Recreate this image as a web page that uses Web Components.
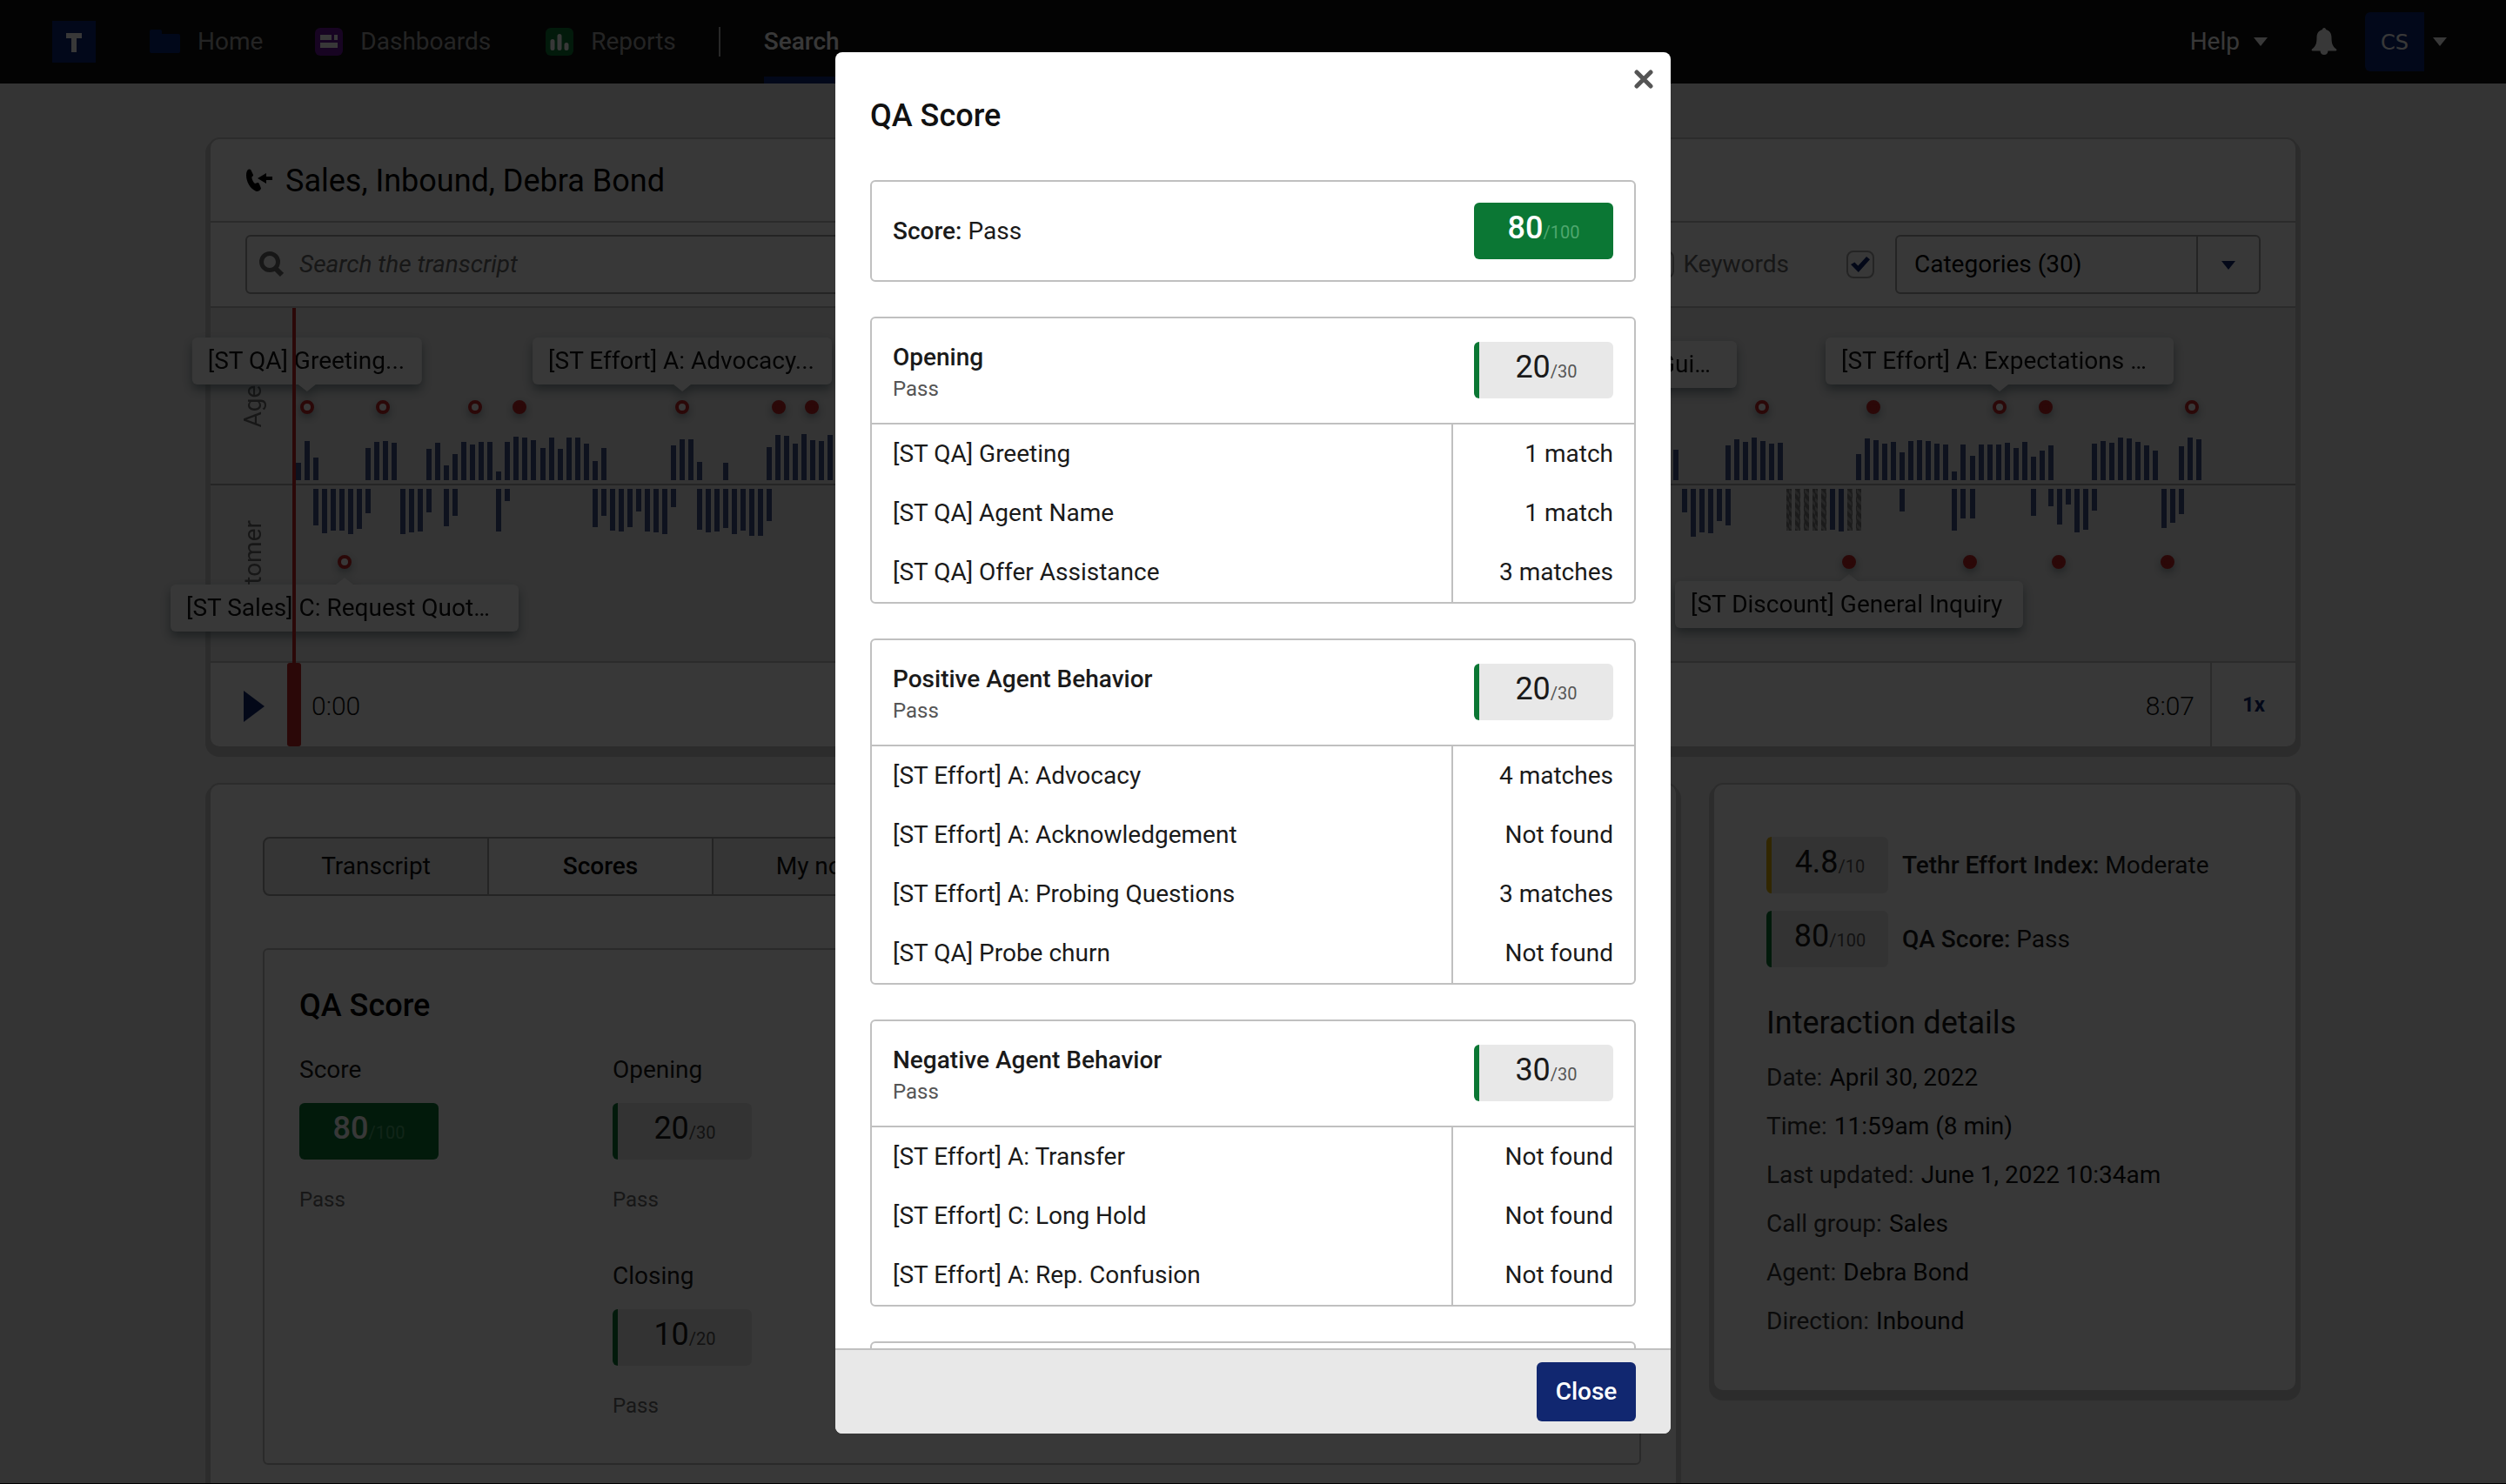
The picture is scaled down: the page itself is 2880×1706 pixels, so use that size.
<!DOCTYPE html>
<html lang="en">
<head>
<meta charset="utf-8">
<title>QA Score</title>
<style>
  html, body { margin: 0; height: 100%; }
  body { overflow: hidden; background: #ebebeb; color: #111; font: 400 28px/40px Roboto, "Liberation Sans", sans-serif; }
</style>
</head>
<body>
<call-page></call-page>
<qa-modal></qa-modal>

<script>
const define = (name, html, setup) => {
  const tpl = document.createElement('template');
  tpl.innerHTML = html;
  customElements.define(name, class extends HTMLElement {
    connectedCallback() {
      if (this.shadowRoot) return;
      this.attachShadow({ mode: 'open' }).append(tpl.content.cloneNode(true));
      if (setup) setup(this, this.shadowRoot);
    }
  });
};

/* ---------- score badge ---------- */
define('score-badge', `
<style>
  :host { display: block; flex: none; width: 160px; --tone: #0b7734; }
  :host([tone="amber"]) { --tone: #e5b000; }
  :host([size="small"]) { width: 140px; }
  .box { box-sizing: border-box; height: 65px; border-radius: 6px; border-left: 6px solid var(--tone); background: #e8e8e8;
         display: flex; justify-content: center; align-items: baseline; line-height: 58px; color: #1a1a1a; }
  .value { font-size: 36px; }
  .max { font-size: 20px; color: #555; }
  :host([solid]) .box { background: var(--tone); border-left: 0; color: #fff; }
  :host([solid]) .value { font-weight: 500; }
  :host([solid]) .max { color: #4fa76e; }
</style>
<div class="box"><span class="value"></span><span class="max"></span></div>`,
(el, root) => {
  root.querySelector('.value').textContent = el.getAttribute('value');
  root.querySelector('.max').textContent = '/' + el.getAttribute('max');
});

/* ---------- top navigation ---------- */
define('app-nav', `
<style>
  :host { display: flex; justify-content: space-between; align-items: center; height: 96px; padding: 0 68px 0 60px; background: #0e0e0e; color: #fff; }
  nav, .right { display: flex; align-items: center; }
  a { display: flex; align-items: center; color: #a6a6a6; text-decoration: none; line-height: 94px; }
  svg { display: block; flex: none; }
  .logo { margin-right: 62px; }
  .home { gap: 20px; margin-right: 60px; }
  .dash { gap: 20px; margin-right: 63px; }
  .rep { gap: 20px; }
  .rule { width: 2px; height: 34px; margin: 0 50px 0 49px; background: #b8b8b8; }
  .search { box-sizing: border-box; height: 96px; padding-top: 8px; border-bottom: 8px solid #0b2778; color: #fff; font-weight: 500; }
  button { display: flex; align-items: center; border: 0; margin: 0; padding: 0; background: none; color: #fff; font: inherit; }
  .help { gap: 16px; margin-right: 50px; line-height: 94px; }
  .bell { margin-right: 32px; }
  .user { gap: 10px; }
  .avatar { width: 68px; height: 68px; border-radius: 6px 0 0 6px; background: #0b2778; font: 24px/70px "DejaVu Sans", sans-serif; text-align: center; }
</style>
<nav aria-label="Main">
  <a class="logo" href="#" aria-label="Start"><svg width="50" height="48"><path fill="#0b2778" d="M0 0h50v48H0z"/><path fill="#fff" d="M16 14h18v6h-6v16h-6V20h-6z"/></svg></a>
  <a class="home" href="#"><svg width="35" height="28"><path fill="#082678" d="M2 0h10q2 0 2 2v3h19q2 0 2 2v18q0 2-2 2H2q-2 0-2-2V2q0-2 2-2z"/></svg>Home</a>
  <a class="dash" href="#"><svg width="32" height="32"><rect width="32" height="32" rx="6" fill="#69129b"/><path fill="#fff" d="M6 8h13v6H6zM22 8h4v6h-4zM6 17h20v6H6z"/></svg>Dashboards</a>
  <a class="rep" href="#"><svg width="32" height="32"><rect width="32" height="32" rx="6" fill="#0b7734"/><g stroke="#fff" stroke-width="5" stroke-linecap="round"><path d="M8 15.500v8M16 9.500v14M24 19.500v4"/></g></svg>Reports</a>
  <span class="rule"></span>
  <a class="search" href="#" aria-current="page">Search</a>
</nav>
<div class="right">
  <button class="help">Help<svg width="16" height="10"><path fill="#fff" d="M0 0h16L8 10z"/></svg></button>
  <button class="bell" aria-label="Notifications"><svg width="30" height="32"><path fill="#fff" d="M15 0c1.500 0 2 1 2 2 4 1 6.500 4 6.500 9 0 7 1 10 5.500 13.500.8.900.4 2-.7 2H19.500c-.3 3-2 4.500-4.500 4.500s-4.200-1.500-4.500-4.500H1.700c-1.100 0-1.500-1.100-.7-2C5.500 21 6.500 18 6.500 11c0-5 2.500-8 6.500-9 0-1 .5-2 2-2z"/></svg></button>
  <button class="user" aria-label="Account"><span class="avatar">CS</span><svg width="16" height="10"><path fill="#fff" d="M0 0h16L8 10z"/></svg></button>
</div>`);

/* ---------- white card ---------- */
define('ui-card', `
<style>
  :host { display: block; box-sizing: border-box; background: #fff; border: 2px solid #c8c8c8; border-radius: 12px; box-shadow: 0 6px 0 4px #c8c8c8; }
</style><slot></slot>`);

/* ---------- search bar of the call ---------- */
define('transcript-bar', `
<style>
  :host { display: flex; align-items: center; height: 96px; padding: 0 40px; border-bottom: 2px solid #c4c4c4; }
  .find { box-sizing: border-box; flex: 1; display: flex; align-items: center; gap: 18px; height: 68px; padding: 0 14px; margin-right: 40px; border: 2px solid #a2a2a2; border-radius: 6px; }
  .find input { flex: 1; min-width: 0; border: 0; padding: 0; background: none; outline: 0; font: italic 28px/40px Roboto, sans-serif; }
  .find input::placeholder { color: #6a6a6a; opacity: 1; }
  label { display: flex; align-items: center; gap: 10px; margin-right: 66px; color: #6a6a6a; }
  input[type=checkbox] { appearance: none; box-sizing: border-box; flex: none; width: 32px; height: 32px; margin: 0; border: 2px solid #a2a2a2; border-radius: 8px; display: grid; place-items: center; }
  input:checked::before { content: ""; width: 22px; height: 18px; background: #112770; clip-path: polygon(0 50%, 20% 36%, 38% 58%, 82% 0, 100% 18%, 40% 100%); }
  .pick { display: grid; grid-template-columns: 1fr 74px; width: 420px; margin-left: 24px; }
  select { grid-area: 1 / 1 / 2 / 3; appearance: none; box-sizing: border-box; height: 68px; border: 2px solid #a2a2a2; border-radius: 6px; padding: 0 20px; background: none; color: #000; font: inherit; }
  .arrow { grid-area: 1 / 2; pointer-events: none; border-left: 2px solid #a2a2a2; margin: 2px 0; padding: 2px 2px 0 0; display: grid; place-items: center; }
</style>
<div class="find">
  <svg width="28" height="30" fill="none" stroke="#6a6a6a"><circle cx="12" cy="12" r="9.500" stroke-width="5"/><path d="M18 19l8 8" stroke-width="6"/></svg>
  <input type="text" aria-label="Search the transcript" placeholder="Search the transcript">
</div>
<label><input type="checkbox">Keywords</label>
<input type="checkbox" checked aria-label="Show categories">
<div class="pick">
  <select aria-label="Categories"><option>Categories (30)</option></select>
  <span class="arrow"><svg width="16" height="10"><path fill="#112770" d="M0 0h16L8 10z"/></svg></span>
</div>`);

/* ---------- speech timeline ---------- */
const SLOTS = 219;
const TRACK = 2194;
const AGENT = [
  [0, 20,45,26], [8, 37,44,45,43],
  [15, 36,43,17,30,44,41,44,44,10,44,50,49,46,37,49,36,49,49,42,22,37],
  [43, 40,47,47,21], [49, 20], [54, 38,52,51,42,53,46,45,52], [158, 35],
  [164, 40,47,44,49,45,42,43],
  [179, 30,48,46,42,44,32,45,46,45,42,41,10,41,28,41,41,41,43,37,44,27,34,40],
  [206, 42,45,43,49,48,44,40,34], [216, 39,49,47]
];
const CUSTOMER = [
  [2, 42,51,48,48,52,46,28], [12, 52,50,49,27], [17, 43,31], [23, 49,14],
  [34, 44,31,48,49,44,26,49,50,52,21], [46, 47,50,49,45,52,48,54,54,37],
  [159, 27,55,50,51,37,42], [171, -48,-48,-48,-48,-48,47,49,-48,-48],
  [184, 26], [190, 48,34,34], [199, 31], [201, 20,41,18,50,47,25], [214, 45,39,29]
];
const MARKS = {
  agent: { open: [13, 100, 206, 444, 1685, 1958, 2179], full: [257, 555, 593, 1813, 2011] },
  customer: { open: [56], full: [1785, 1924, 2026, 2151] }
};
const pct = x => (x / TRACK * 100) + '%';

define('speech-lane', `
<style>
  :host { display: flex; height: 202px; }
  :host([side="agent"]) { border-bottom: 2px solid #a8a8a8; }
  .who { flex: none; width: 98px; display: grid; place-items: center; color: #6a6a6a; }
  .who span { writing-mode: vertical-rl; transform: rotate(180deg); }
  .track { flex: 1; position: relative; display: flex; margin-right: 104px; }
  .bars { width: 100%; height: 60px; margin-top: 4px; }
  :host([side="agent"]) .bars { align-self: flex-end; margin: 0 0 4px; }
  i { position: absolute; top: 80px; box-sizing: border-box; width: 16px; height: 16px; margin-left: -8px; border-radius: 50%; border: 4px solid #c42424; background: #fff; box-shadow: 0 4px 10px rgba(20, 50, 60, .4); }
  :host([side="agent"]) i { top: 106px; }
  i.full { background: #c42424; }
</style>
<div class="who"><span><slot name="who"></slot></span></div>
<div class="track">
  <svg class="bars"><defs><pattern id="hatch" width="6" height="10" patternUnits="userSpaceOnUse"><rect width="6" height="10" fill="#7c7c7c"/><path d="M0 0l6 6v4L0 4z" fill="#adadad"/></pattern></defs></svg>
  <slot></slot>
</div>`,
(el, root) => {
  const side = el.getAttribute('side'), top = side === 'agent';
  const svg = root.querySelector('svg');
  for (const [start, ...heights] of top ? AGENT : CUSTOMER)
    heights.forEach((h, n) => {
      const r = document.createElementNS('http://www.w3.org/2000/svg', 'rect');
      const size = Math.abs(h);
      r.setAttribute('x', Math.round((start + n) / SLOTS * TRACK) / TRACK * 100 + '%');
      r.setAttribute('y', top ? 60 - size : 0);
      r.setAttribute('width', 6);
      r.setAttribute('height', size);
      r.setAttribute('shape-rendering', 'crispEdges');
      r.setAttribute('fill', h < 0 ? 'url(#hatch)' : '#3f5588');
      svg.append(r);
    });
  for (const kind of ['open', 'full'])
    for (const x of MARKS[side][kind]) {
      const dot = document.createElement('i');
      dot.className = kind;
      dot.style.left = pct(x);
      root.querySelector('.track').append(dot);
    }
});

define('lane-tip', `
<style>
  :host { position: absolute; top: 34px; transform: translateX(-50%); filter: drop-shadow(0 6px 6px rgba(20, 50, 60, .45)); }
  :host([below]) { top: 110px; }
  :host([low]) { margin-top: 4px; }
  .box { box-sizing: border-box; height: 54px; max-width: 400px; padding: 0 20px 0 18px; border-radius: 6px; background: #fff; color: #111; line-height: 54px; }
  .text { overflow: hidden; text-overflow: ellipsis; white-space: nowrap; }
  :host([wide]) .box { width: 400px; }
  :host([end]) .text { text-align: right; padding-right: 10px; }
  svg { position: absolute; left: 50%; top: 54px; margin-left: -10px; }
  :host([below]) svg { top: -8px; transform: scaleY(-1); }
</style>
<div class="box"><div class="text"><slot></slot></div></div>
<svg width="20" height="8"><path fill="#fff" d="M0 0h20L10 8z"/></svg>`,
el => { el.style.left = pct(+el.getAttribute('at')); });

define('speech-timeline', `
<style>
  :host { display: block; position: relative; background: #ebebeb; border-bottom: 2px solid #c4c4c4; }
  .head { position: absolute; left: 94px; top: 0; bottom: -2px; width: 4px; background: #c42424; }
</style>
<speech-lane side="agent"><span slot="who">Agent</span>
  <lane-tip at="13">[ST QA] Greeting...</lane-tip>
  <lane-tip at="444">[ST Effort] A: Advocacy...</lane-tip>
  <lane-tip at="1456" wide low end>Gui…</lane-tip>
  <lane-tip at="1958" wide>[ST Effort] A: Expectations set</lane-tip>
</speech-lane>
<speech-lane side="customer"><span slot="who">Customer</span>
  <lane-tip at="56" below low wide>[ST Sales] C: Request Quotation</lane-tip>
  <lane-tip at="1785" below wide>[ST Discount] General Inquiry</lane-tip>
</speech-lane>
<div class="head"></div>`);

/* ---------- player ---------- */
define('call-player', `
<style>
  :host { display: grid; grid-template-columns: 88px 1fr 98px; height: 96px; }
  button { border: 0; margin: 0; padding: 0; background: none; font: inherit; }
  .play { display: flex; align-items: center; padding: 4px 0 0 38px; }
  .bar { display: grid; }
  .bar > * { grid-area: 1 / 1; }
  .times { display: flex; justify-content: space-between; align-items: center; padding: 4px 18px 0 28px; font-weight: 300; font-size: 30px; line-height: 44px; color: #111; pointer-events: none; }
  input { appearance: none; width: 100%; height: 96px; margin: 0; background: none; }
  input::-webkit-slider-thumb { appearance: none; width: 16px; height: 96px; border-radius: 3px; background: #c42424; }
  .speed { border-left: 2px solid #c4c4c4; color: #112770; font-size: 24px; font-weight: 700; }
</style>
<button class="play" aria-label="Play"><svg width="24" height="36"><path fill="#112770" d="M0 0l24 18L0 36z"/></svg></button>
<div class="bar">
  <input type="range" min="0" max="487" value="0" aria-label="Position">
  <div class="times"><span>0:00</span><span>8:07</span></div>
</div>
<button class="speed">1x</button>`);

define('call-card', `
<style>
  :host { display: block; }
  h1 { box-sizing: border-box; display: flex; align-items: center; gap: 14px; height: 96px; margin: 0; padding: 2px 40px 0; border-bottom: 2px solid #c4c4c4; color: #000; font-size: 36px; font-weight: 400; }
</style>
<ui-card>
  <h1><svg width="32" height="30"><path d="M2.500 2.500C3.500 1.300 5.500 1.200 6.300 2.200L9 8c.3 1-.5 1.700-1.500 2.300C7 12.500 9 16.500 11 18l3-1c1-.2 1.600.4 2 1.500l2 5c-.3 2-4 4.500-6 3.200C5 23.500 1 15.500 1 8.500 1 5.500 1.500 4 2.500 2.500z"/><path d="M14 12l10-6v4h7v4h-7v4z"/></svg>Sales, Inbound, Debra Bond</h1>
  <transcript-bar></transcript-bar>
  <speech-timeline></speech-timeline>
  <call-player></call-player>
</ui-card>`);

/* ---------- scores panel ---------- */
define('score-cell', `
<style>
  :host { display: block; }
  h3 { margin: 0 0 18px; font-size: 28px; font-weight: 400; color: #1a1a1a; }
  p { margin: 26px 0 0; font-size: 24px; color: #6a6a6a; }
</style>
<h3></h3><slot></slot><p>Pass</p>`,
(el, root) => { root.querySelector('h3').textContent = el.getAttribute('label'); });

define('scores-card', `
<style>
  :host { display: block; }
  ui-card { padding: 60px 40px 60px 60px; }
  .tabs { display: grid; grid-template-columns: repeat(3, 258px); width: max-content; border: 2px solid #a2a2a2; border-radius: 8px; margin-bottom: 60px; background: #f2f2f2; overflow: hidden; }
  .tabs button { box-sizing: border-box; height: 64px; border: 0; border-right: 2px solid #a2a2a2; margin: 0; padding: 0; background: none; color: #111; font: inherit; }
  .tabs button:last-child { border-right: 0; }
  .tabs [aria-selected=true] { background: #fff; color: #000; font-weight: 500; }
  section { border: 2px solid #c0c0c0; border-radius: 6px; padding: 42px 40px 46px; }
  h2 { margin: 0 0 32px; font-size: 36px; font-weight: 500; line-height: 44px; color: #000; }
  .grid { display: grid; grid-template-columns: repeat(4, 360px); row-gap: 48px; }
  .closing { grid-column: 2; }
</style>
<ui-card>
  <div class="tabs" role="tablist">
    <button role="tab">Transcript</button><button role="tab" aria-selected="true">Scores</button><button role="tab">My notes</button>
  </div>
  <section>
    <h2>QA Score</h2>
    <div class="grid">
      <score-cell label="Score"><score-badge solid value="80" max="100"></score-badge></score-cell>
      <score-cell label="Opening"><score-badge value="20" max="30"></score-badge></score-cell>
      <score-cell class="closing" label="Closing"><score-badge value="10" max="20"></score-badge></score-cell>
    </div>
  </section>
</ui-card>`);

/* ---------- interaction details ---------- */
define('details-card', `
<style>
  :host { display: block; }
  ui-card { padding: 60px 60px 51px; }
  .line { display: flex; align-items: center; gap: 16px; margin-bottom: 20px; color: #1a1a1a; }
  b { font-weight: 500; }
  h2 { margin: 42px 0 13px; font-size: 36px; font-weight: 400; line-height: 44px; color: #1a1a1a; }
  dl { margin: 0; }
  dl div { display: flex; gap: 8px; line-height: 56px; }
  dt { color: #333; }
  dd { margin: 0; color: #111; }
</style>
<ui-card>
  <div class="line"><score-badge size="small" tone="amber" value="4.8" max="10"></score-badge><span><b>Tethr Effort Index:</b> Moderate</span></div>
  <div class="line"><score-badge size="small" value="80" max="100"></score-badge><span><b>QA Score:</b> Pass</span></div>
  <h2>Interaction details</h2>
  <dl>
    <div><dt>Date:</dt><dd>April 30, 2022</dd></div>
    <div><dt>Time:</dt><dd>11:59am (8 min)</dd></div>
    <div><dt>Last updated:</dt><dd>June 1, 2022 10:34am</dd></div>
    <div><dt>Call group:</dt><dd>Sales</dd></div>
    <div><dt>Agent:</dt><dd>Debra Bond</dd></div>
    <div><dt>Direction:</dt><dd>Inbound</dd></div>
  </dl>
</ui-card>`);

define('call-page', `
<style>
  :host { display: block; height: 100vh; overflow: hidden; }
  main { max-width: 2400px; margin: 0 auto; padding-top: 62px; display: grid; grid-template-columns: 1fr 672px; gap: 40px; align-items: start; }
  call-card { grid-column: 1 / 3; }
</style>
<app-nav></app-nav>
<main>
  <call-card></call-card>
  <scores-card></scores-card>
  <details-card></details-card>
</main>`);

/* ---------- modal ---------- */
define('score-group', `
<style>
  :host { display: block; flex: none; border: 2px solid #c0c0c0; border-radius: 6px; color: #1a1a1a; }
  header { box-sizing: border-box; display: flex; align-items: flex-start; justify-content: space-between; height: 122px; padding: 27px 24px 0; border-bottom: 2px solid #c0c0c0; }
  h3 { margin: 0; font-size: 28px; font-weight: 500; line-height: 36px; }
  p { margin: 0; font-size: 24px; line-height: 36px; color: #555; }
  table { width: 100%; border-collapse: separate; border-spacing: 0; }
  td { box-sizing: border-box; height: 68px; padding: 0 24px; }
  td + td { width: 210px; border-left: 2px solid #c0c0c0; text-align: right; }
</style>
<header><div><h3></h3><p></p></div><slot></slot></header>
<table><tbody></tbody></table>`,
(el, root) => {
  root.querySelector('h3').textContent = el.getAttribute('label');
  root.querySelector('p').textContent = el.getAttribute('result');
  const body = root.querySelector('tbody');
  for (const [name, found] of JSON.parse(el.getAttribute('rows') || '[]')) {
    const tr = body.insertRow();
    tr.insertCell().textContent = name;
    tr.insertCell().textContent = found;
  }
});

define('qa-modal', `
<style>
  :host { position: fixed; inset: 0; box-sizing: border-box; padding: 60px 0 57px; display: flex; justify-content: center; background: rgba(0, 0, 0, .782); border-bottom: 1px solid #000; }
  .dialog { position: relative; width: 960px; display: flex; flex-direction: column; border-radius: 8px; overflow: hidden; background: #fff; }
  .x { position: absolute; right: 20px; top: 20px; border: 0; margin: 0; padding: 0; background: none; }
  svg { display: block; }
  .body { flex: 1; min-height: 0; overflow: hidden; display: flex; flex-direction: column; gap: 40px; padding: 51px 40px 0; }
  h2 { margin: 0 0 12px; font-size: 36px; font-weight: 500; line-height: 44px; color: #111; }
  .total { flex: none; display: flex; align-items: center; justify-content: space-between; border: 2px solid #c0c0c0; border-radius: 6px; padding: 24px; color: #1a1a1a; }
  b { font-weight: 500; }
  footer { flex: none; display: flex; justify-content: flex-end; padding: 14px 40px; border-top: 2px solid #c0c0c0; background: #e8e8e8; }
  .close { min-width: 114px; height: 68px; border: 0; border-radius: 6px; margin: 0; padding: 0 20px; background: #112770; color: #fff; font: inherit; font-weight: 500; }
</style>
<div class="dialog" role="dialog" aria-modal="true" aria-labelledby="title">
  <button class="x" aria-label="Close dialog"><svg width="22" height="22"><path d="M3 3l16 16M19 3L3 19" stroke="#555" stroke-width="5" stroke-linecap="round"/></svg></button>
  <div class="body">
    <h2 id="title">QA Score</h2>
    <div class="total"><span><b>Score:</b> Pass</span><score-badge solid value="80" max="100"></score-badge></div>
    <score-group label="Opening" result="Pass" rows='[["[ST QA] Greeting","1 match"],["[ST QA] Agent Name","1 match"],["[ST QA] Offer Assistance","3 matches"]]'><score-badge value="20" max="30"></score-badge></score-group>
    <score-group label="Positive Agent Behavior" result="Pass" rows='[["[ST Effort] A: Advocacy","4 matches"],["[ST Effort] A: Acknowledgement","Not found"],["[ST Effort] A: Probing Questions","3 matches"],["[ST QA] Probe churn","Not found"]]'><score-badge value="20" max="30"></score-badge></score-group>
    <score-group label="Negative Agent Behavior" result="Pass" rows='[["[ST Effort] A: Transfer","Not found"],["[ST Effort] C: Long Hold","Not found"],["[ST Effort] A: Rep. Confusion","Not found"]]'><score-badge value="30" max="30"></score-badge></score-group>
    <score-group></score-group>
  </div>
  <footer><button class="close">Close</button></footer>
</div>`);
</script>
</body>
</html>
